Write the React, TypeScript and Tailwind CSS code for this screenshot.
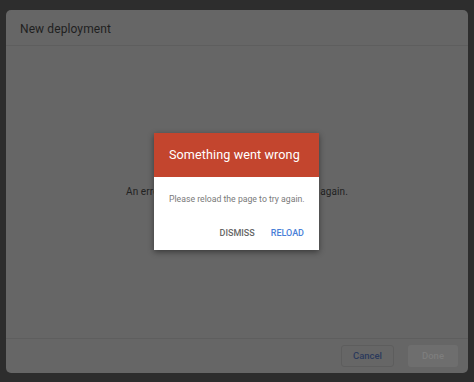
import React from "react";

export default function App() {
  return (
    <div
      className="w-[474px] h-[382px] bg-[#2d2d2d] pt-[10px] pl-[6px] overflow-hidden relative"
      style={{ fontFamily: "Roboto, 'Open Sans', Arial, sans-serif" }}
    >
      <div className="w-[462px] h-[363px] rounded-[5px] bg-[#666666] flex flex-col">
        <div className="h-[36px] border-b border-[#5e5e5e] flex items-center pl-[14px] pt-[2px]">
          <span className="text-[12px] text-[#1f1f1f] tracking-[0.1px]">New deployment</span>
        </div>
        <div className="flex-1 flex items-center justify-center">
          <span className="text-[10px] text-[#222222] pb-[2px] tracking-[0.1px]">
            An error occurred while loading. Please try again.
          </span>
        </div>
        <div className="h-[35px] border-t border-[#5e5e5e] flex items-center justify-end gap-[14px] pr-[10px]">
          <div className="w-[53px] h-[22px] rounded-[3px] border border-[#5d5d5d] flex items-center justify-center text-[9.5px] font-medium text-[#2b3a5c]">
            Cancel
          </div>
          <div className="w-[50px] h-[22px] rounded-[3px] bg-[#6e6e6e] flex items-center justify-center text-[9.5px] font-medium text-[#7d7d7d]">
            Done
          </div>
        </div>
      </div>

      <div className="absolute left-[154px] top-[133px] w-[165px] h-[117px] bg-white shadow-[0_2px_6px_rgba(0,0,0,0.45)] flex flex-col">
        <div className="h-[44px] bg-[#c3452e] flex items-center pl-[15px]">
          <span className="text-[12.6px] text-white tracking-[0.1px]">Something went wrong</span>
        </div>
        <div className="pl-[15px] pt-[16px] text-[8.7px] text-[#7a7a7a]">
          Please reload the page to try again.
        </div>
        <div className="flex-1 flex items-end justify-end gap-[16px] pr-[15px] pb-[10px]">
          <span className="text-[9px] font-medium text-[#666666]">DISMISS</span>
          <span className="text-[9px] font-medium text-[#4a7fd8]">RELOAD</span>
        </div>
      </div>
    </div>
  );
}
